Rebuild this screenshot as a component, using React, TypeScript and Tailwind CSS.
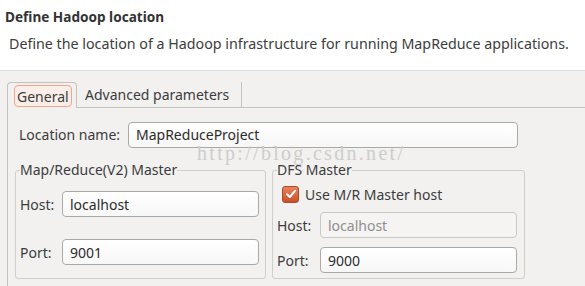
import React from "react";

function Input({ value, disabled, className }: { value: string; disabled?: boolean; className?: string }) {
  return (
    <div
      className={
        "h-[26px] rounded-[4px] border border-[#a9a9a6] flex items-center pl-[7px] text-[14px] " +
        (disabled
          ? "bg-[#f5f4f3] border-[#c9c8c5] text-[#8f8f8f] "
          : "bg-gradient-to-b from-[#ffffff] to-[#f7f7f7] text-[#2c2c2c] ") +
        (className ?? "")
      }
    >
      {value}
    </div>
  );
}

export default function App() {
  return (
    <div className="relative w-[585px] h-[286px] overflow-hidden bg-[#f2f1f0] text-[#3c3c3c] font-['Noto_Sans',sans-serif]">
      <div className="h-[71px] bg-white border-b border-[#dcdbd9]">
        <div className="pl-[5px] pt-[7px] text-[13.6px] font-bold leading-[20px] text-[#333]">Define Hadoop location</div>
        <div className="pl-[9px] pt-[7px] text-[14.25px] leading-[20px]">
          Define the location of a Hadoop infrastructure for running MapReduce applications.
        </div>
      </div>
      <div className="pl-[7px] pt-[11px]">
        <div className="flex h-[26px]">
          <div className="w-[70px] rounded-t-[4px] border border-b-0 border-[#c4c3c0] flex items-center pl-[6px] pt-[1px]">
            <span className="rounded-[4px] border border-[#f0a58c] bg-[#fbeee8] px-[2px] h-[22px] flex items-center text-[14px]">
              General
            </span>
          </div>
          <div className="w-[165px] border-b border-r border-[#c4c3c0] flex items-center pl-[8px] text-[14px]">
            Advanced parameters
          </div>
          <div className="flex-1 border-b border-[#c4c3c0]" />
        </div>
        <div className="border-l border-[#c4c3c0] h-[200px] pl-[11px] pt-[13px]">
          <div className="flex items-center h-[27px]">
            <span className="w-[109px] text-[14px]">Location name:</span>
            <Input value="MapReduceProject" className="w-[390px]" />
          </div>
          <div className="flex gap-[6px] mt-[14px] -ml-[4px]">
            <fieldset className="w-[251px] h-[117px] border border-[#cfceca] rounded-[3px] px-[4px]">
              <legend className="text-[14px] leading-[16px] px-0 ml-0">Map/Reduce(V2) Master</legend>
              <div className="flex items-center mt-[13px]">
                <span className="w-[42px] text-[14px]">Host:</span>
                <Input value="localhost" className="w-[197px]" />
              </div>
              <div className="flex items-center mt-[22px]">
                <span className="w-[42px] text-[14px]">Port:</span>
                <Input value="9001" className="w-[197px]" />
              </div>
            </fieldset>
            <fieldset className="w-[253px] h-[117px] border border-[#cfceca] rounded-[3px] px-[4px]">
              <legend className="text-[14px] leading-[16px]">DFS Master</legend>
              <div className="flex items-center mt-[5px] ml-[5px] h-[22px]">
                <div className="w-[17px] h-[17px] rounded-[3px] bg-gradient-to-b from-[#e8825a] to-[#c9502a] border border-[#b04a25] flex items-center justify-center">
                  <svg width="12" height="12" viewBox="0 0 12 12">
                    <path d="M2 6.2 L4.8 9 L10 2.8" stroke="#fff" strokeWidth="2" fill="none" strokeLinecap="round" strokeLinejoin="round" />
                  </svg>
                </div>
                <span className="ml-[6px] text-[14px]">Use M/R Master host</span>
              </div>
              <div className="flex items-center mt-[7px]">
                <span className="w-[43px] text-[14px]">Host:</span>
                <Input value="localhost" disabled className="w-[197px]" />
              </div>
              <div className="flex items-center mt-[9px]">
                <span className="w-[43px] text-[14px]">Port:</span>
                <Input value="9000" className="w-[197px]" />
              </div>
            </fieldset>
          </div>
        </div>
      </div>
      <div className="absolute left-[197px] top-[147px] text-[20px] leading-[12px] text-[#cdcdcd] font-['Liberation_Serif',serif] tracking-[2.3px]">
        http://blog.csdn.net/
      </div>
    </div>
  );
}
